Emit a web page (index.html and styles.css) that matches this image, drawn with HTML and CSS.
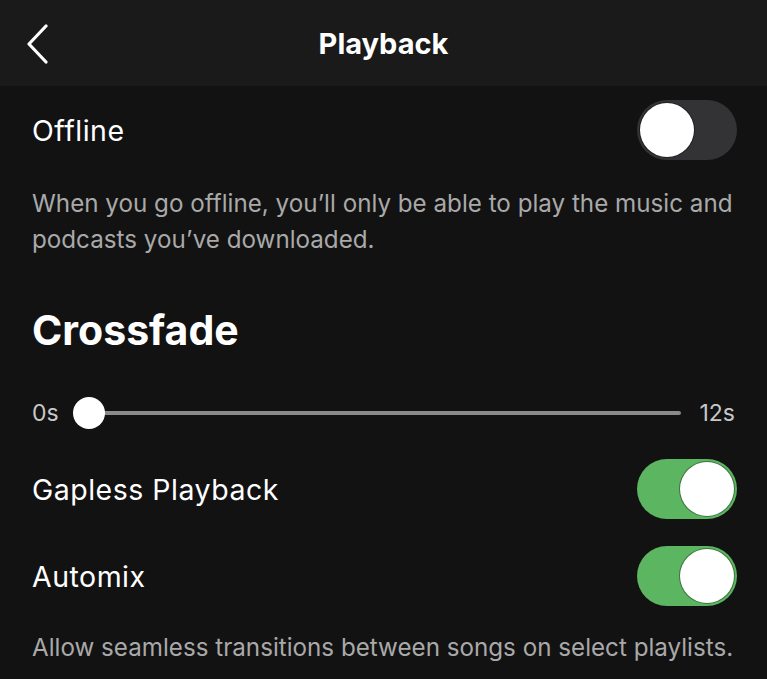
FILE: index.html
```html
<!DOCTYPE html>
<html>
<head>
<meta charset="utf-8">
<link rel="stylesheet" href="styles.css">
</head>
<body>
<header class="topbar">
  <svg class="back" width="24" height="40" viewBox="0 0 24 40"><path d="M21 2 L4 20 L21 38" fill="none" stroke="#fff" stroke-width="3.2" stroke-linecap="round" stroke-linejoin="round"/></svg>
  <h1 class="title">Playback</h1>
</header>
<main class="content">
  <div class="row row-offline">
    <span class="label">Offline</span>
    <span class="toggle off"><span class="knob"></span></span>
  </div>
  <p class="desc desc-offline">When you go offline, you’ll only be able to play the music and podcasts you’ve downloaded.</p>
  <h2 class="section">Crossfade</h2>
  <div class="slider">
    <span class="slabel">0s</span>
    <span class="sknob"></span>
    <span class="strack"></span>
    <span class="slabel end">12s</span>
  </div>
  <div class="row row-gapless">
    <span class="label">Gapless Playback</span>
    <span class="toggle on"><span class="knob"></span></span>
  </div>
  <div class="row row-automix">
    <span class="label">Automix</span>
    <span class="toggle on"><span class="knob"></span></span>
  </div>
  <p class="desc desc-automix">Allow seamless transitions between songs on select playlists.</p>
</main>
</body>
</html>
```
FILE: styles.css
```css
* { box-sizing: border-box; }
html, body { margin: 0; padding: 0; }
body {
  background: #121212;
  color: #fff;
  font-family: "Inter", "Liberation Sans", sans-serif;
  width: 767px;
  height: 679px;
  overflow: hidden;
}
.topbar {
  height: 86px;
  background: #1a1a1a;
  display: flex;
  align-items: center;
  justify-content: center;
  position: relative;
}
.back {
  position: absolute;
  left: 25px;
  top: 24px;
}
.title {
  margin: 0;
  font-size: 29px;
  font-weight: 700;
  letter-spacing: 0;
}
.content {
  padding: 14px 30px 0 32px;
}
.row {
  display: flex;
  align-items: center;
  justify-content: space-between;
  height: 60px;
}
.label {
  font-size: 28.5px;
  font-weight: 400;
  letter-spacing: 0.5px;
}
.toggle {
  width: 100px;
  height: 60px;
  border-radius: 30px;
  display: flex;
  align-items: center;
  padding: 0 3px;
}
.toggle.off { background: #333336; justify-content: flex-start; }
.toggle.on { background: #5cb560; justify-content: flex-end; }
.knob {
  width: 54px;
  height: 54px;
  border-radius: 50%;
  background: #fff;
  box-shadow: 0 0 0 1px rgba(0,0,0,0.35);
}
.desc {
  margin: 0;
  color: #a9a9a9;
  font-size: 24.2px;
  line-height: 36px;
}
.desc-offline { margin-top: 26px; }
.section {
  margin: 48px 0 0;
  font-size: 41px;
  line-height: 48px;
  font-weight: 700;
}
.slider {
  display: flex;
  align-items: center;
  height: 32px;
  margin-top: 43px;
  margin-right: 2px;
}
.slabel {
  font-size: 23px;
  color: #c8c8c8;
}
.sknob {
  width: 32px;
  height: 32px;
  border-radius: 50%;
  background: #fff;
  margin-left: 14px;
  flex: none;
}
.strack {
  flex: 1;
  height: 4px;
  border-radius: 2px;
  background: #8a8a8a;
  margin-left: -16px;
  position: relative;
  z-index: -1;
}
.slabel.end { margin-left: 18px; }
.row-gapless { margin-top: 30px; }
.row-automix { margin-top: 27px; }
.desc-automix { margin-top: 24px; }
```
